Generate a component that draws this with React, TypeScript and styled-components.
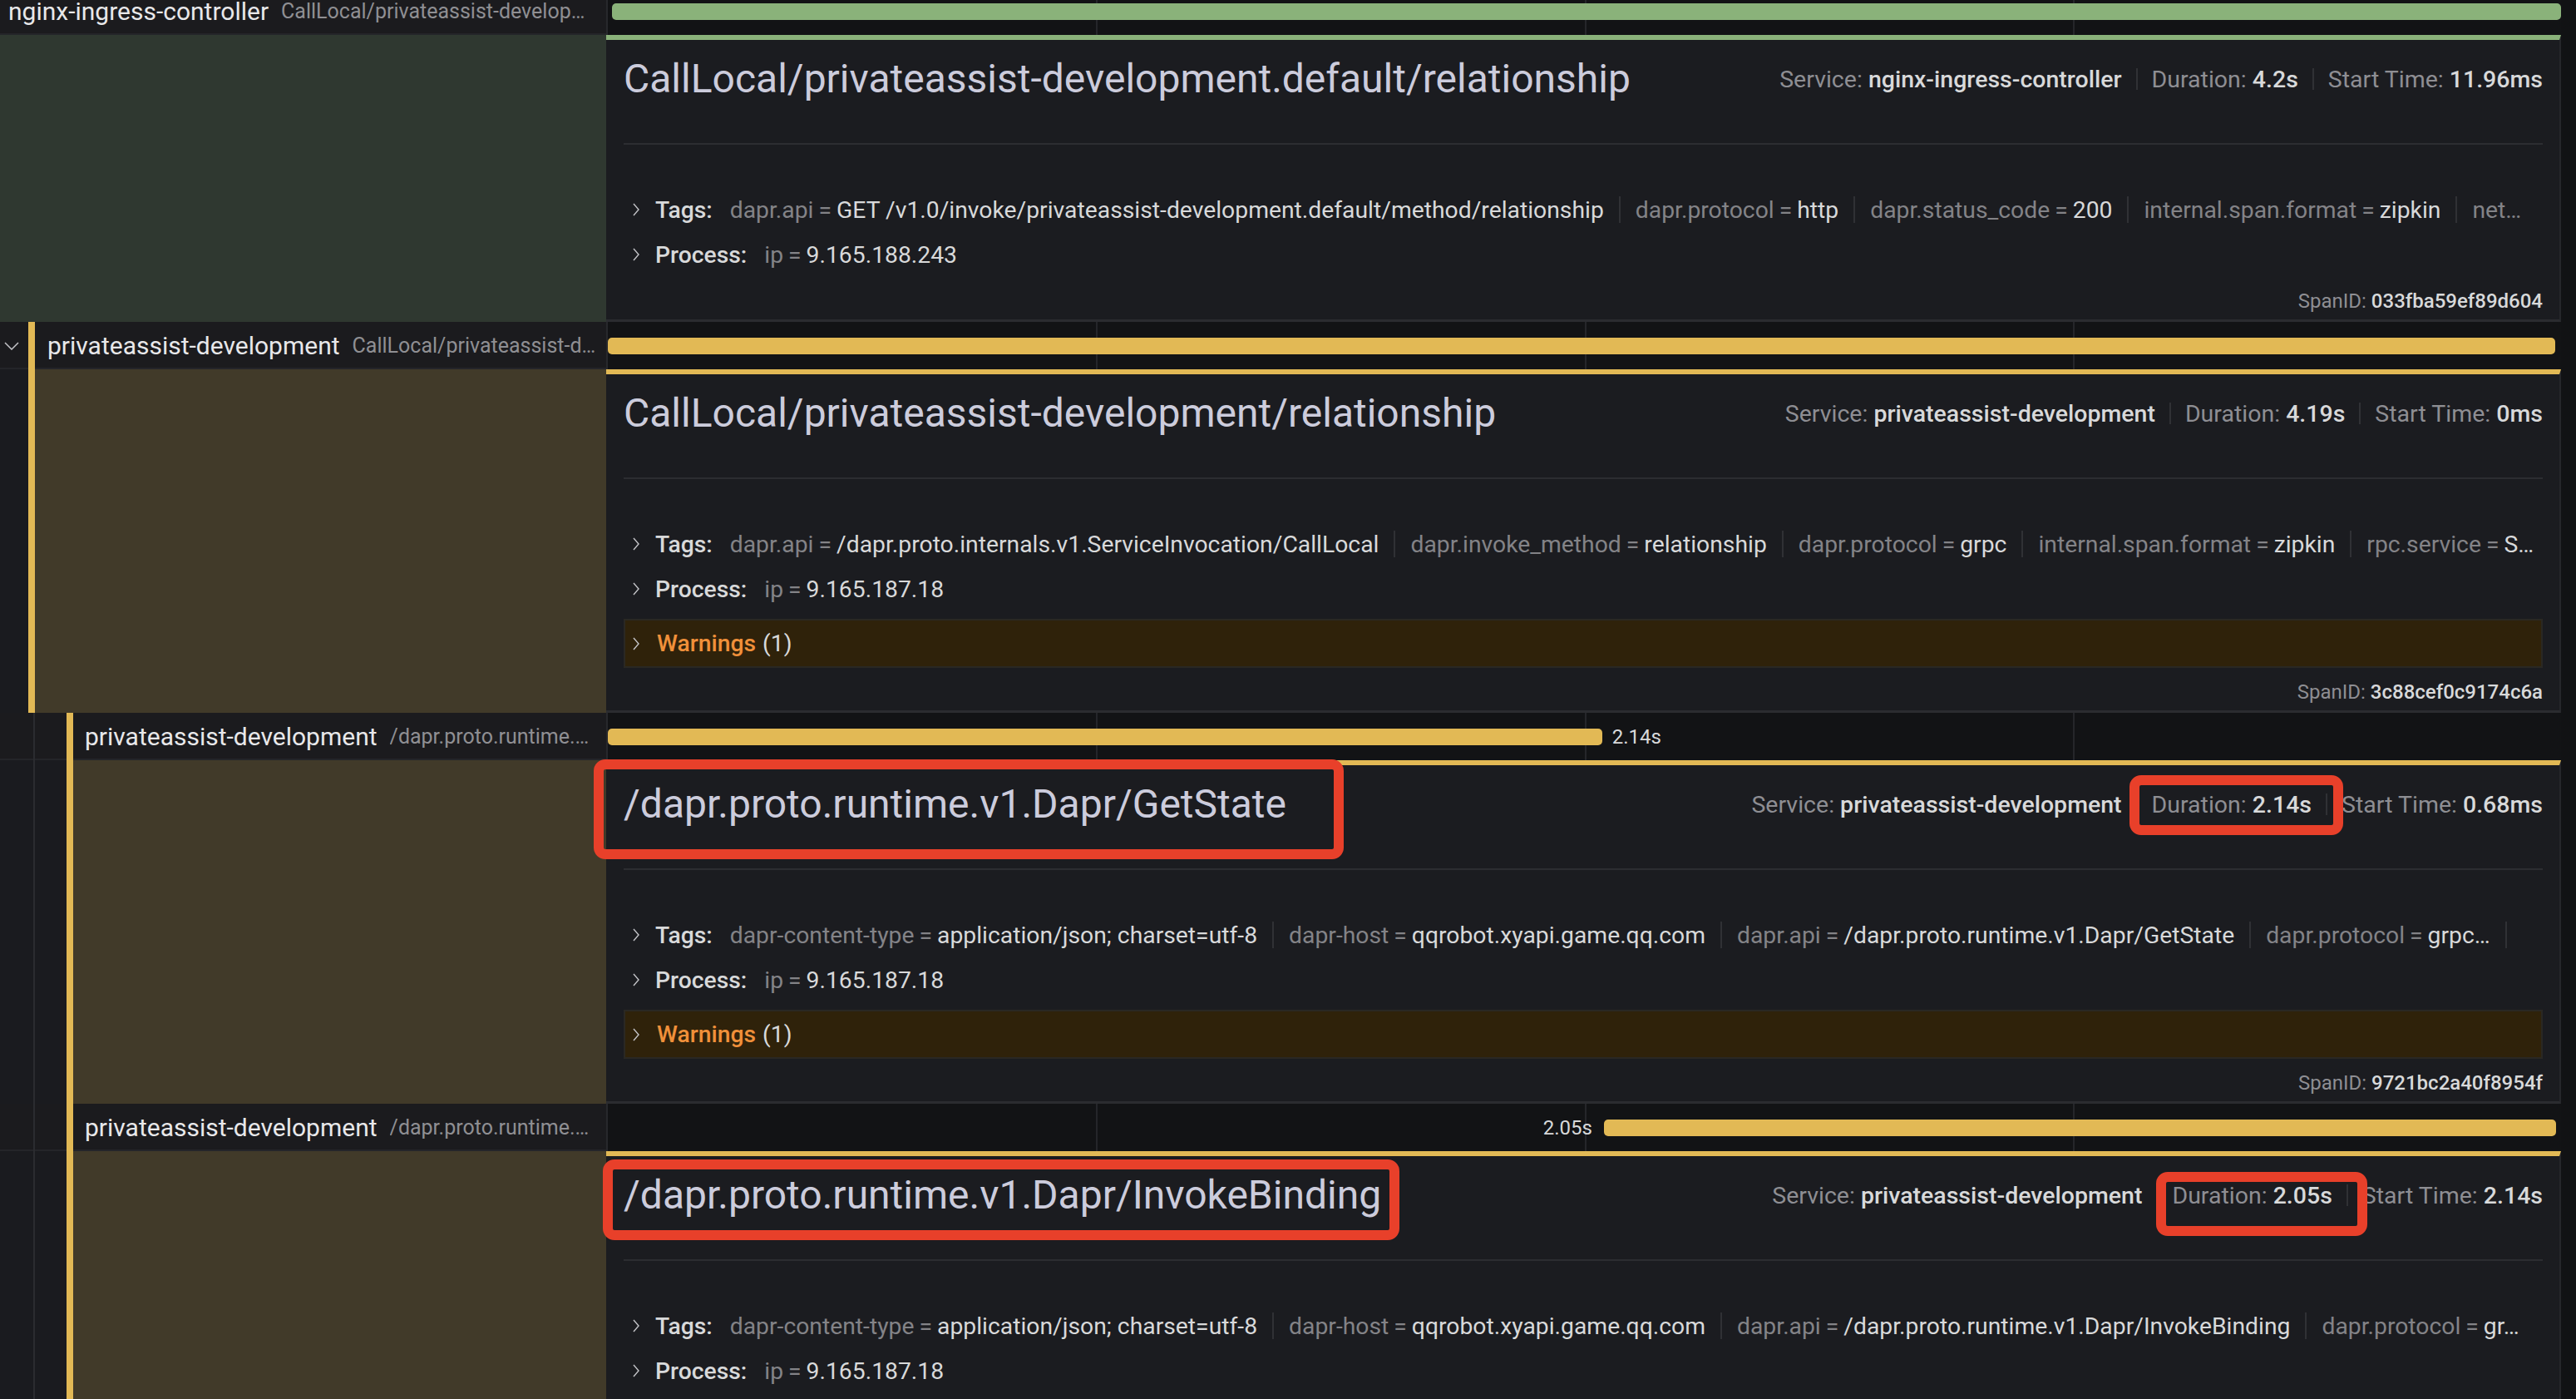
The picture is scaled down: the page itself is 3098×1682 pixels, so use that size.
import React from 'react';
import styled, { createGlobalStyle } from 'styled-components';

const GlobalStyle = createGlobalStyle`
  html, body { margin: 0; padding: 0; background: #111214; }
  body { font-family: Roboto, "Liberation Sans", Arial, sans-serif; }
  * { box-sizing: border-box; }
`;

const GREEN = '#8ab27a';
const GREEN_TINT = '#2f3830';
const YELLOW = '#e2b955';
const YELLOW_TINT = '#413a29';

type KV = { key: string; value?: string };
type Side = 'left' | 'right';
interface SpanData {
  id: string;
  depth: 0 | 1 | 2;
  service: string;
  op: string;
  color: string;
  tint: string;
  bar: { left: number; width: number; label?: string; side?: Side };
  title: string;
  service2: string;
  duration: string;
  start: string;
  tags: KV[];
  ip: string;
  warnings?: number;
  spanId: string;
}

const spans: SpanData[] = [
  {
    id: 'a',
    depth: 0,
    service: 'nginx-ingress-controller',
    op: 'CallLocal/privateassist-development.default/relationship',
    color: GREEN,
    tint: GREEN_TINT,
    bar: { left: 0.21, width: 99.79 },
    title: 'CallLocal/privateassist-development.default/relationship',
    service2: 'nginx-ingress-controller',
    duration: '4.2s',
    start: '11.96ms',
    tags: [
      { key: 'dapr.api', value: 'GET /v1.0/invoke/privateassist-development.default/method/relationship' },
      { key: 'dapr.protocol', value: 'http' },
      { key: 'dapr.status_code', value: '200' },
      { key: 'internal.span.format', value: 'zipkin' },
      { key: 'net…' },
    ],
    ip: '9.165.188.243',
    spanId: '033fba59ef89d604',
  },
  {
    id: 'b',
    depth: 1,
    service: 'privateassist-development',
    op: 'CallLocal/privateassist-development/relationship',
    color: YELLOW,
    tint: YELLOW_TINT,
    bar: { left: 0, width: 99.7 },
    title: 'CallLocal/privateassist-development/relationship',
    service2: 'privateassist-development',
    duration: '4.19s',
    start: '0ms',
    tags: [
      { key: 'dapr.api', value: '/dapr.proto.internals.v1.ServiceInvocation/CallLocal' },
      { key: 'dapr.invoke_method', value: 'relationship' },
      { key: 'dapr.protocol', value: 'grpc' },
      { key: 'internal.span.format', value: 'zipkin' },
      { key: 'rpc.service', value: 'S…' },
    ],
    ip: '9.165.187.18',
    warnings: 1,
    spanId: '3c88cef0c9174c6a',
  },
  {
    id: 'c',
    depth: 2,
    service: 'privateassist-development',
    op: '/dapr.proto.runtime.v1.Dapr/GetState',
    color: YELLOW,
    tint: YELLOW_TINT,
    bar: { left: 0, width: 50.9, label: '2.14s', side: 'right' },
    title: '/dapr.proto.runtime.v1.Dapr/GetState',
    service2: 'privateassist-development',
    duration: '2.14s',
    start: '0.68ms',
    tags: [
      { key: 'dapr-content-type', value: 'application/json; charset=utf-8' },
      { key: 'dapr-host', value: 'qqrobot.xyapi.game.qq.com' },
      { key: 'dapr.api', value: '/dapr.proto.runtime.v1.Dapr/GetState' },
      { key: 'dapr.protocol', value: 'grpc…' },
      { key: '' },
    ],
    ip: '9.165.187.18',
    warnings: 1,
    spanId: '9721bc2a40f8954f',
  },
  {
    id: 'd',
    depth: 2,
    service: 'privateassist-development',
    op: '/dapr.proto.runtime.v1.Dapr/InvokeBinding',
    color: YELLOW,
    tint: YELLOW_TINT,
    bar: { left: 51.0, width: 48.75, label: '2.05s', side: 'left' },
    title: '/dapr.proto.runtime.v1.Dapr/InvokeBinding',
    service2: 'privateassist-development',
    duration: '2.05s',
    start: '2.14s',
    tags: [
      { key: 'dapr-content-type', value: 'application/json; charset=utf-8' },
      { key: 'dapr-host', value: 'qqrobot.xyapi.game.qq.com' },
      { key: 'dapr.api', value: '/dapr.proto.runtime.v1.Dapr/InvokeBinding' },
      { key: 'dapr.protocol', value: 'gr…' },
    ],
    ip: '9.165.187.18',
    spanId: '',
  },
];

const Page = styled.div`
  position: relative;
  width: 3098px;
  height: 1682px;
  overflow: hidden;
  background: #111214;
`;

const TraceList = styled.div`
  width: 3080px;
  margin-top: -15px;
  display: flex;
  flex-direction: column;
`;

const SpanRow = styled.div`
  display: grid;
  grid-template-columns: 729px minmax(0, 1fr);
  height: 57px;
`;

const NameCell = styled.div`
  display: flex;
  align-items: stretch;
  background: #1b1b1e;
  box-shadow: inset 0 -2px 0 #242529;
  overflow: hidden;
`;

const Gutter = styled.div<{ $width: number }>`
  flex: none;
  width: ${p => p.$width}px;
  display: flex;
  align-items: center;
`;

const GuideLine = styled.div`
  align-self: stretch;
  flex: none;
  width: 42px;
  border-right: 2px solid #2b2c30;
`;

const Stripe = styled.div<{ $color: string }>`
  flex: none;
  width: 8px;
  background: ${p => p.$color};
`;

const SpanLabel = styled.div<{ $pad: number }>`
  flex: 1;
  min-width: 0;
  display: flex;
  align-items: center;
  padding-left: ${p => p.$pad}px;
  padding-right: 9px;
  white-space: nowrap;
`;

const ServiceName = styled.span`
  flex: none;
  font-size: 30px;
  color: #e8e8ea;
`;

const OpName = styled.span`
  min-width: 0;
  margin-left: 15px;
  font-size: 25px;
  color: #8f8f93;
  overflow: hidden;
  text-overflow: ellipsis;
`;

const TimelineCell = styled.div`
  position: relative;
  background: #121315;
  border-left: 2px solid #27282c;
`;

const Tick = styled.div<{ $at: number }>`
  position: absolute;
  top: 0;
  bottom: 0;
  left: ${p => p.$at}%;
  width: 2px;
  background: #25262a;
`;

const Bar = styled.div<{ $color: string }>`
  position: absolute;
  top: 50%;
  height: 20px;
  margin-top: -10px;
  border-radius: 5px;
  background: ${p => p.$color};
`;

const BarLabel = styled.span<{ $side: Side }>`
  position: absolute;
  top: 50%;
  transform: translateY(-50%);
  font-size: 24px;
  color: #d8d9da;
  white-space: nowrap;
  ${p => (p.$side === 'right' ? 'left: calc(100% + 12px);' : 'right: calc(100% + 14px);')}
`;

const DetailRow = styled.div`
  display: grid;
  grid-template-columns: 729px minmax(0, 1fr);
`;

const DetailLeft = styled.div`
  display: flex;
  align-items: stretch;
  background: #1a1b1f;
`;

const Tint = styled.div<{ $tint: string }>`
  flex: 1;
  background: ${p => p.$tint};
`;

const DetailPanel = styled.div<{ $accent: string }>`
  min-width: 0;
  background: #1b1c20;
  border-top: 6px solid ${p => p.$accent};
  border-bottom: 3px solid #2b2c30;
  border-right: 2px solid #26272b;
  padding: 0 20px 7px 21px;
`;

const DetailHeader = styled.div`
  height: 94px;
  display: flex;
  align-items: center;
  justify-content: space-between;
  gap: 40px;
`;

const Title = styled.h2`
  margin: 0;
  font-size: 48px;
  font-weight: 400;
  line-height: 1.1;
  color: #ccccdc;
  white-space: nowrap;
`;

const Overview = styled.div`
  display: flex;
  align-items: center;
  font-size: 28.5px;
  white-space: nowrap;
`;

const OverviewItem = styled.span`
  color: #8e8e93;
`;

const SmallItem = styled.span`
  color: #8e8e93;
  font-size: 24px;
`;

const Strong = styled.span`
  color: #d8d9da;
  font-weight: 500;
`;

const VDivider = styled.span<{ $h: number; $gap: number }>`
  flex: none;
  width: 2px;
  height: ${p => p.$h}px;
  margin: 0 ${p => p.$gap}px;
  background: #303135;
`;

const Separator = styled.div`
  height: 2px;
  margin-top: 30px;
  background: #2c2d31;
`;

const KVSection = styled.div`
  padding-top: 51px;
`;

const KVRow = styled.div`
  height: 54px;
  display: flex;
  align-items: center;
  padding-left: 11px;
  font-size: 28.3px;
  white-space: nowrap;
  overflow: hidden;
`;

const ChevronIcon = styled.svg`
  flex: none;
  width: 8px;
  height: 16px;
`;

const KVLabel = styled.span`
  flex: none;
  margin-left: 19px;
  margin-right: 21px;
  color: #d8d9da;
  font-weight: 500;
`;

const KVList = styled.div`
  display: flex;
  align-items: center;
  min-width: 0;
  overflow: hidden;
`;

const KVItem = styled.span`
  flex: none;
  display: flex;
  align-items: center;
`;

const Key = styled.span`
  color: #838387;
`;

const Eq = styled.span`
  color: #838387;
  margin: 0 6px;
`;

const Val = styled.span`
  color: #d8d9da;
`;

const WarningBox = styled.div`
  height: 59px;
  margin-top: 9px;
  display: flex;
  align-items: center;
  padding-left: 9px;
  background: #2f220a;
  border: 2px solid #2a2823;
  font-size: 28.3px;
`;

const WarningTitle = styled.span`
  margin-left: 21px;
  color: #f0903a;
  font-weight: 500;
`;

const WarningCount = styled.span`
  margin-left: 8px;
  color: #d8d9da;
`;

const SpanIdRow = styled.div`
  height: 30px;
  margin-top: 14px;
  display: flex;
  justify-content: flex-end;
  align-items: center;
`;

const Annotation = styled.div<{ $x: number; $y: number; $w: number; $h: number }>`
  position: absolute;
  left: ${p => p.$x}px;
  top: ${p => p.$y}px;
  width: ${p => p.$w}px;
  height: ${p => p.$h}px;
  border: 12px solid #e8402a;
  border-radius: 14px;
  pointer-events: none;
`;

const Chevron = () => (
  <ChevronIcon viewBox="0 0 8 16">
    <polyline points="1,1 7,8 1,15" fill="none" stroke="#c4c4c8" strokeWidth="1.4" />
  </ChevronIcon>
);

const ToggleIcon = styled.svg`
  margin-left: 5px;
  width: 18px;
  height: 10px;
`;

const Toggle = () => (
  <ToggleIcon viewBox="0 0 18 10">
    <polyline points="1,1 9,9 17,1" fill="none" stroke="#c4c4c8" strokeWidth="1.5" />
  </ToggleIcon>
);

const SpanGutter: React.FC<{ depth: number; color: string; header: boolean }> = ({ depth, color, header }) => {
  if (depth === 0) return null;
  if (depth === 1)
    return (
      <>
        <Gutter $width={34}>{header && <Toggle />}</Gutter>
        <Stripe $color={color} />
      </>
    );
  return (
    <>
      <Gutter $width={80}>
        <GuideLine />
      </Gutter>
      <Stripe $color={color} />
    </>
  );
};

const labelPad = [10, 15, 14];

const SpanBlock: React.FC<{ s: SpanData }> = ({ s }) => (
  <>
    <SpanRow>
      <NameCell>
        <SpanGutter depth={s.depth} color={s.color} header />
        <SpanLabel $pad={labelPad[s.depth]}>
          <ServiceName>{s.service}</ServiceName>
          <OpName>{s.op}</OpName>
        </SpanLabel>
      </NameCell>
      <TimelineCell>
        <Tick $at={25} />
        <Tick $at={50} />
        <Tick $at={75} />
        <Bar $color={s.color} style={{ left: `${s.bar.left}%`, width: `${s.bar.width}%` }}>
          {s.bar.label && <BarLabel $side={s.bar.side || 'right'}>{s.bar.label}</BarLabel>}
        </Bar>
      </TimelineCell>
    </SpanRow>
    <DetailRow>
      <DetailLeft>
        <SpanGutter depth={s.depth} color={s.color} header={false} />
        <Tint $tint={s.tint} />
      </DetailLeft>
      <DetailPanel $accent={s.color}>
        <DetailHeader>
          <Title>{s.title}</Title>
          <Overview>
            <OverviewItem>
              Service: <Strong>{s.service2}</Strong>
            </OverviewItem>
            <VDivider $h={26} $gap={17} />
            <OverviewItem>
              Duration: <Strong>{s.duration}</Strong>
            </OverviewItem>
            <VDivider $h={26} $gap={17} />
            <OverviewItem>
              Start Time: <Strong>{s.start}</Strong>
            </OverviewItem>
          </Overview>
        </DetailHeader>
        <Separator />
        <KVSection>
          <KVRow>
            <Chevron />
            <KVLabel>Tags:</KVLabel>
            <KVList>
              {s.tags.map((t, i) => (
                <React.Fragment key={i}>
                  {i > 0 && <VDivider $h={32} $gap={18} />}
                  <KVItem>
                    <Key>{t.key}</Key>
                    {t.value !== undefined && (
                      <>
                        <Eq>=</Eq>
                        <Val>{t.value}</Val>
                      </>
                    )}
                  </KVItem>
                </React.Fragment>
              ))}
            </KVList>
          </KVRow>
          <KVRow>
            <Chevron />
            <KVLabel>Process:</KVLabel>
            <KVList>
              <KVItem>
                <Key>ip</Key>
                <Eq>=</Eq>
                <Val>{s.ip}</Val>
              </KVItem>
            </KVList>
          </KVRow>
          {s.warnings ? (
            <WarningBox>
              <Chevron />
              <WarningTitle>Warnings</WarningTitle>
              <WarningCount>({s.warnings})</WarningCount>
            </WarningBox>
          ) : null}
          {s.spanId && (
            <SpanIdRow>
              <SmallItem>
                SpanID: <Strong>{s.spanId}</Strong>
              </SmallItem>
            </SpanIdRow>
          )}
        </KVSection>
      </DetailPanel>
    </DetailRow>
  </>
);

export default function App() {
  return (
    <Page>
      <GlobalStyle />
      <TraceList>
        {spans.map(s => (
          <SpanBlock key={s.id} s={s} />
        ))}
      </TraceList>
      <Annotation $x={714} $y={913} $w={902} $h={120} />
      <Annotation $x={2561} $y={932} $w={257} $h={72} />
      <Annotation $x={725} $y={1394} $w={958} $h={97} />
      <Annotation $x={2593} $y={1409} $w={254} $h={77} />
    </Page>
  );
}
